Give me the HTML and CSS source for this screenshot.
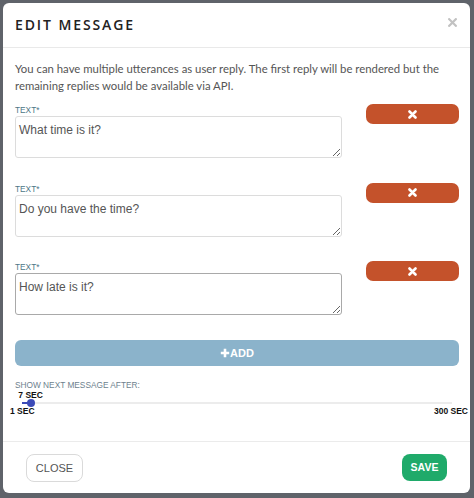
FILE: index.html
```html
<!DOCTYPE html>
<html>
<head>
<meta charset="utf-8">
<link rel="stylesheet" href="styles.css">
</head>
<body>
<div class="modal">
  <div class="modal-header">
    <h2 class="title">EDIT MESSAGE</h2>
    <button class="close-x" aria-label="Close">
      <svg width="9" height="9" viewBox="0 0 9 9"><path d="M1.2 1.2 L7.8 7.8 M7.8 1.2 L1.2 7.8" stroke="#c2c2c2" stroke-width="2.2" stroke-linecap="square"/></svg>
    </button>
  </div>
  <div class="modal-body">
    <p class="intro">You can have multiple utterances as user reply. The first reply will be rendered but the remaining replies would be available via API.</p>

    <div class="utterance">
      <div class="field">
        <label class="field-label">TEXT*</label>
        <textarea class="field-input">What time is it?</textarea>
      </div>
      <button class="remove" aria-label="Remove">
        <svg width="9" height="9" viewBox="0 0 9 9"><path d="M1.5 1.5 L7.5 7.5 M7.5 1.5 L1.5 7.5" stroke="#fff" stroke-width="2.6" stroke-linecap="round"/></svg>
      </button>
    </div>

    <div class="utterance">
      <div class="field">
        <label class="field-label">TEXT*</label>
        <textarea class="field-input">Do you have the time?</textarea>
      </div>
      <button class="remove" aria-label="Remove">
        <svg width="9" height="9" viewBox="0 0 9 9"><path d="M1.5 1.5 L7.5 7.5 M7.5 1.5 L1.5 7.5" stroke="#fff" stroke-width="2.6" stroke-linecap="round"/></svg>
      </button>
    </div>

    <div class="utterance">
      <div class="field">
        <label class="field-label">TEXT*</label>
        <textarea class="field-input focused">How late is it?</textarea>
      </div>
      <button class="remove" aria-label="Remove">
        <svg width="9" height="9" viewBox="0 0 9 9"><path d="M1.5 1.5 L7.5 7.5 M7.5 1.5 L1.5 7.5" stroke="#fff" stroke-width="2.6" stroke-linecap="round"/></svg>
      </button>
    </div>

    <button class="add">
      <svg width="10" height="10" viewBox="0 0 10 10"><path d="M5 0.8 V9.2 M0.8 5 H9.2" stroke="#fff" stroke-width="2.6"/></svg><span>ADD</span>
    </button>

    <div class="delay">
      <div class="delay-label">SHOW NEXT MESSAGE AFTER:</div>
      <div class="slider">
        <div class="slider-value" style="left: 2%">7 SEC</div>
        <div class="slider-track">
          <div class="slider-fill" style="width: 2%"></div>
          <div class="slider-thumb" style="left: 2%"></div>
        </div>
      </div>
      <div class="slider-range">
        <span>1 SEC</span>
        <span>300 SEC</span>
      </div>
    </div>
  </div>
  <div class="modal-footer">
    <button class="btn btn-close">CLOSE</button>
    <button class="btn btn-save">SAVE</button>
  </div>
</div>
</body>
</html>
```
FILE: styles.css
```css
html, body {
  margin: 0;
  padding: 0;
}
body {
  background: #5f636a;
  width: 474px;
  height: 498px;
  overflow: hidden;
  padding: 3px 4px 0 3px;
  box-sizing: border-box;
  font-family: "Liberation Sans", Arial, sans-serif;
}
.modal {
  background: #fff;
  border-radius: 6px;
  width: 467px;
  overflow: hidden;
}
.modal-header {
  display: flex;
  justify-content: space-between;
  align-items: flex-start;
  padding: 12px 13px 12px 12px;
  border-bottom: 1px solid #e9e9e9;
}
.title {
  margin: 0;
  font-family: "Open Sans", sans-serif;
  font-weight: 600;
  font-size: 14px;
  line-height: 20px;
  letter-spacing: 1.9px;
  color: #222;
}
.close-x {
  border: 0;
  background: none;
  padding: 0;
  margin-top: 3px;
  width: 9px;
  height: 9px;
  display: flex;
}
.modal-body {
  padding: 13px 11px 25px 12px;
}
.intro {
  margin: 0 0 10px;
  font-family: "Lato", sans-serif;
  font-size: 11.35px;
  line-height: 16.5px;
  color: #555;
}
.utterance {
  display: flex;
  justify-content: space-between;
  align-items: flex-start;
  margin-bottom: 24.5px;
}
.utterance:last-of-type {
  margin-bottom: 25px;
}
.field {
  display: flex;
  flex-direction: column;
  width: 327px;
}
.field-label {
  font-size: 8.3px;
  line-height: 12px;
  color: #4d7686;
}
.field-input {
  box-sizing: border-box;
  width: 327px;
  height: 42px;
  margin: 0;
  border: 1px solid #dcdcdc;
  border-radius: 3px;
  padding: 6px 3px;
  font-family: "Liberation Sans", Arial, sans-serif;
  font-size: 12px;
  color: #555;
  resize: vertical;
  outline: none;
}
.field-input.focused {
  border-color: #a9a9a9;
}
.remove {
  width: 93px;
  height: 20px;
  border: 0;
  border-radius: 7px;
  background: #c4522b;
  display: flex;
  align-items: center;
  justify-content: center;
  padding: 0;
}
.add {
  width: 100%;
  height: 26px;
  border: 0;
  border-radius: 6px;
  background: #8bb3cb;
  color: #fff;
  font-family: "Liberation Sans", Arial, sans-serif;
  font-weight: bold;
  font-size: 11px;
  display: flex;
  align-items: center;
  justify-content: center;
  padding: 0;
}
.add span {
  line-height: 12px;
}
.delay {
  margin-top: 14px;
}
.delay-label {
  font-size: 8.3px;
  line-height: 10px;
  color: #6d7f8d;
}
.slider {
  position: relative;
  margin: 0 7px;
  height: 16px;
}
.slider-value {
  position: absolute;
  top: 0;
  transform: translateX(-50%);
  font-weight: bold;
  font-size: 8.5px;
  line-height: 10px;
  color: #111;
  white-space: nowrap;
}
.slider-track {
  position: absolute;
  left: 0;
  right: 0;
  top: 12px;
  height: 2px;
  background: #ececec;
}
.slider-fill {
  height: 2px;
  background: #3b4bb8;
}
.slider-thumb {
  position: absolute;
  top: -3px;
  width: 8px;
  height: 8px;
  margin-left: -4px;
  border-radius: 50%;
  background: #3b4bb8;
}
.slider-range {
  display: flex;
  justify-content: space-between;
  margin: 0 -9px 0 -5px;
  font-weight: bold;
  font-size: 8.5px;
  line-height: 10px;
  color: #111;
}
.modal-footer {
  display: flex;
  justify-content: space-between;
  align-items: flex-start;
  padding: 12px 23px 11px 23px;
  border-top: 1px solid #ebebeb;
}
.btn {
  height: 27px;
  border-radius: 8px;
  font-family: "Liberation Sans", Arial, sans-serif;
  font-size: 11px;
  padding: 0;
}
.btn-close {
  width: 57px;
  height: 28px;
  background: #fff;
  border: 1px solid #dadada;
  color: #555;
}
.btn-save {
  width: 45px;
  background: #1faa6a;
  border: 0;
  color: #fff;
  font-weight: bold;
  font-size: 10.5px;
}
```
